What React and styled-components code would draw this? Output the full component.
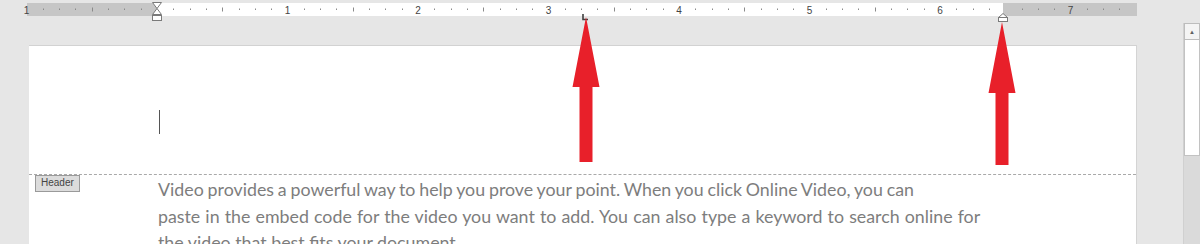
import React from "react";
import styled, { createGlobalStyle } from "styled-components";

const GlobalStyle = createGlobalStyle`
  html, body {
    margin: 0;
    padding: 0;
    background: #e6e6e6;
    overflow: hidden;
  }
`;

const INCH = 130.5;
const MARGIN_X = 130; // left margin inside the ruler

const Window = styled.div`
  position: relative;
  display: flex;
  width: 1200px;
  height: 244px;
  background: #e6e6e6;
  overflow: hidden;
  font-family: "Lato", "Open Sans", sans-serif;
`;

const Main = styled.div`
  flex: 1;
  display: flex;
  flex-direction: column;
`;

const RulerBar = styled.div`
  padding: 3px 0 0 27px;
`;

const Ruler = styled.div`
  position: relative;
  display: flex;
  width: 1110px;
  height: 13px;
  background: #c6c6c6;
`;

const RulerMargin = styled.div`
  width: ${(p) => p.$w}px;
  height: 100%;
`;

const RulerColumn = styled.div`
  width: ${(p) => p.$w}px;
  height: 100%;
  background: #ffffff;
`;

const RulerMarks = styled.svg`
  position: absolute;
  left: 0;
  top: -3px;
  overflow: visible;
`;

const Canvas = styled.div`
  flex: 1;
  padding: 29px 0 0 29px;
`;

const Page = styled.div`
  width: 1107px;
  height: 300px;
  background: #ffffff;
  border-top: 1px solid #d2d2d2;
  border-right: 1px solid #d4d4d4;
`;

const HeaderArea = styled.div`
  height: 129px;
  padding-left: 130px;
  border-bottom: 1px dashed #a9a9a9;
  box-sizing: border-box;
  padding-top: 64px;
`;

const Caret = styled.div`
  width: 1px;
  height: 24px;
  background: #555555;
`;

const Body = styled.div`
  position: relative;
  padding: 1px 0 0 129px;
`;

const HeaderTag = styled.div`
  position: absolute;
  left: 6px;
  top: 0;
  padding: 1px 5px 2px;
  background: #dcdcdc;
  border: 1px solid #9a9a9a;
  font-family: "Liberation Sans", Arial, sans-serif;
  font-size: 10px;
  color: #444444;
  line-height: 12px;
`;

const Line = styled.div`
  white-space: nowrap;
  font-size: 17.8px;
  line-height: 26.5px;
  color: #7d7d7d;
  word-spacing: ${(p) => p.$ws || 0}px;
`;

const Scrollbar = styled.div`
  width: 17px;
  margin-top: 23px;
  display: flex;
  flex-direction: column;
  background: #dadada;
  border-left: 1px solid #d0d0d0;
  box-sizing: border-box;
`;

const ScrollButton = styled.div`
  height: 17px;
  display: flex;
  align-items: center;
  justify-content: center;
  background: #f4f4f4;
  border: 1px solid #bdbdbd;
  box-sizing: border-box;
  font-size: 6px;
  color: #606060;
`;

const ScrollThumb = styled.div`
  height: 116px;
  background: #ffffff;
  border: 1px solid #c2c2c2;
  border-top: none;
  box-sizing: border-box;
`;

const Overlay = styled.svg`
  position: absolute;
  left: 0;
  top: 0;
  pointer-events: none;
`;

function RulerTicks() {
  const ticks = [];
  const labels = [];
  for (let n = -1; n <= 7; n++) {
    const base = MARGIN_X + n * INCH;
    if (n !== 0) {
      labels.push(
        <text
          key={"l" + n}
          x={base}
          y={13.5}
          textAnchor="middle"
          fontSize="10"
          fontFamily="Liberation Sans, Arial, sans-serif"
          fill="#444444"
        >
          {Math.abs(n)}
        </text>
      );
    }
    for (let k = 1; k < 8; k++) {
      const x = base + (k * INCH) / 8;
      if (x < 2 || x > 1105) continue;
      if (Math.abs(x - MARGIN_X) < 4 || Math.abs(x - 976) < 4) continue;
      const tall = k === 4;
      ticks.push(
        <rect
          key={"t" + n + k}
          x={Math.round(x)}
          y={tall ? 7.5 : 8.5}
          width={1}
          height={tall ? 4 : 1.5}
          fill="#8a8a8a"
        />
      );
    }
  }
  return (
    <RulerMarks width="1110" height="24">
      {ticks}
      {labels}
      {/* left indent hourglass */}
      <g fill="#ffffff" stroke="#7a7a7a" strokeWidth="1">
        <path d="M125.5 2.5 L134.5 2.5 L130 8.5 Z" />
        <path d="M130 8.5 L134.5 14.5 L125.5 14.5 Z" />
        <rect x="125.5" y="15.5" width="9" height="5" />
      </g>
      {/* tab stop */}
      <path d="M556 14 V19.5 H561" stroke="#404040" strokeWidth="1.6" fill="none" />
      {/* right indent */}
      <g fill="#ffffff" stroke="#7a7a7a" strokeWidth="1">
        <path d="M976 13.5 L980.5 17.5 L971.5 17.5 Z" />
        <rect x="971.5" y="17.5" width="9" height="4" />
      </g>
    </RulerMarks>
  );
}

function Arrow({ tipX, tipY, headY, headHalf, shaftHalf, bottom }) {
  const d = `M${tipX} ${tipY} L${tipX + headHalf} ${headY} L${tipX + shaftHalf} ${headY} L${tipX + shaftHalf} ${bottom} L${tipX - shaftHalf} ${bottom} L${tipX - shaftHalf} ${headY} L${tipX - headHalf} ${headY} Z`;
  return <path d={d} fill="#e8202a" />;
}

export default function App() {
  return (
    <>
      <GlobalStyle />
      <Window>
        <Main>
          <RulerBar>
            <Ruler>
              <RulerMargin $w={MARGIN_X} />
              <RulerColumn $w={846} />
              <RulerMargin $w={134} />
              <RulerTicks />
            </Ruler>
          </RulerBar>
          <Canvas>
            <Page>
              <HeaderArea>
                <Caret />
              </HeaderArea>
              <Body>
                <HeaderTag>Header</HeaderTag>
                <Line $ws={-0.7}>Video provides a powerful way to help you prove your point. When you click Online Video, you can</Line>
                <Line $ws={0.6}>paste in the embed code for the video you want to add. You can also type a keyword to search online for</Line>
                <Line>the video that best fits your document.</Line>
              </Body>
            </Page>
          </Canvas>
        </Main>
        <Scrollbar>
          <ScrollButton>▲</ScrollButton>
          <ScrollThumb />
        </Scrollbar>
        <Overlay width="1200" height="244">
          <Arrow tipX={586} tipY={17} headY={87} headHalf={13.5} shaftHalf={6.5} bottom={162} />
          <Arrow tipX={1002} tipY={22} headY={93} headHalf={13.5} shaftHalf={6.5} bottom={165} />
        </Overlay>
      </Window>
    </>
  );
}
